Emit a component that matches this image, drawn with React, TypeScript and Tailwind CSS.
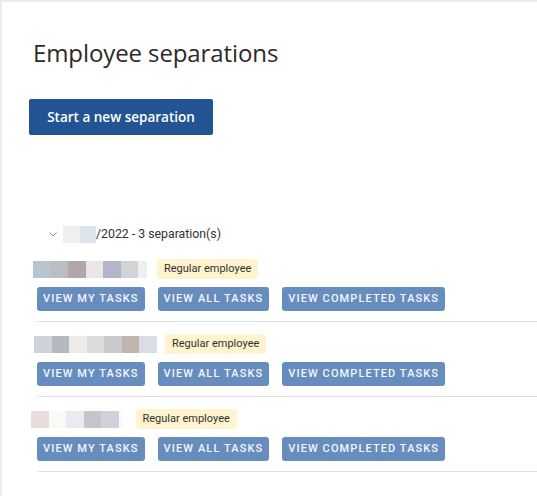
import React from "react";

const rows = [
  {
    offset: "ml-0",
    cells: ["#b8c4d0", "#bcbcc3", "#b3a6a8", "#e9e7e4", "#b3b6ca", "#d2d3d6", "#efefed"],
    last: "w-[9px]",
    badgeGap: "ml-[10px]",
  },
  {
    offset: "ml-[1px]",
    cells: ["#cfd2d8", "#b3b8c2", "#eeebe6", "#dcdcdc", "#c9cacd", "#c0b5ac", "#d9dee4"],
    last: "w-[18px]",
    badgeGap: "ml-[8px]",
  },
  {
    offset: "-ml-[2px]",
    cells: ["#e6dddc", "#faf9f6", "#e8ebf0", "#c5c6ca", "#d1d1db", "#f9fafc"],
    last: "w-[4px]",
    badgeGap: "ml-[13px]",
  },
];

const actions = ["View my tasks", "View all tasks", "View completed tasks"];

const App = () => {
  return (
    <div
      className="min-h-screen w-full border-t-2 border-l-2 border-[#ebebeb] bg-white text-[#323130]"
      style={{ fontFamily: '"Open Sans", "Noto Sans", sans-serif' }}
    >
      <div className="pl-[27px] pt-[35px]">
        <h1 className="ml-[4px] text-[24px] leading-[32px] font-normal tracking-[-0.1px] text-[#2b2a29]">
          Employee separations
        </h1>
        <button className="mt-[30px] h-[36px] w-[184px] rounded-[2px] bg-[#225493] text-[13.5px] font-semibold text-white">
          Start a new separation
        </button>

        <div className="mt-[90px]" style={{ fontFamily: 'Roboto, "Open Sans", sans-serif' }}>
          <div className="flex h-[18px] items-center">
            <svg width="8" height="5" viewBox="0 0 8 5" className="ml-[20px]">
              <polyline points="0.5,0.5 4,4 7.5,0.5" fill="none" stroke="#8a8886" strokeWidth="1" />
            </svg>
            <div className="ml-[6px] flex h-[17px]">
              <div className="w-[17px] bg-[#eef0ef]" />
              <div className="w-[16px] bg-[#dbe5eb]" />
            </div>
            <span className="text-[12.3px] leading-[18px]">/2022 - 3 separation(s)</span>
          </div>

          <div className="mt-[16px]">
            {rows.map((row, i) => (
              <div key={i} className="mb-[12px]">
                <div className={`flex h-[20px] items-center ${row.offset} pl-[4px]`}>
                  <div className="flex h-[17px]">
                    {row.cells.map((c, j) => (
                      <div
                        key={j}
                        className={j === row.cells.length - 1 ? row.last : "w-[17.5px]"}
                        style={{ backgroundColor: c }}
                      />
                    ))}
                  </div>
                  <span
                    className={`${row.badgeGap} rounded-[4px] bg-[#fff4ce] px-[7px] text-[11px] leading-[20px] text-[#323130]`}
                  >
                    Regular employee
                  </span>
                </div>
                <div className="mt-[8px] ml-[8px] flex gap-[13px] border-b border-[#e1e1e1] pb-[10px]">
                  {actions.map((a) => (
                    <button
                      key={a}
                      className="h-[24px] rounded-[3px] bg-[#678dbf] px-[6px] pt-[1px] text-[11px] font-medium uppercase tracking-[1.1px] text-[#f3f6fa]"
                    >
                      {a}
                    </button>
                  ))}
                </div>
              </div>
            ))}
          </div>
        </div>
      </div>
    </div>
  );
};

export default App;
